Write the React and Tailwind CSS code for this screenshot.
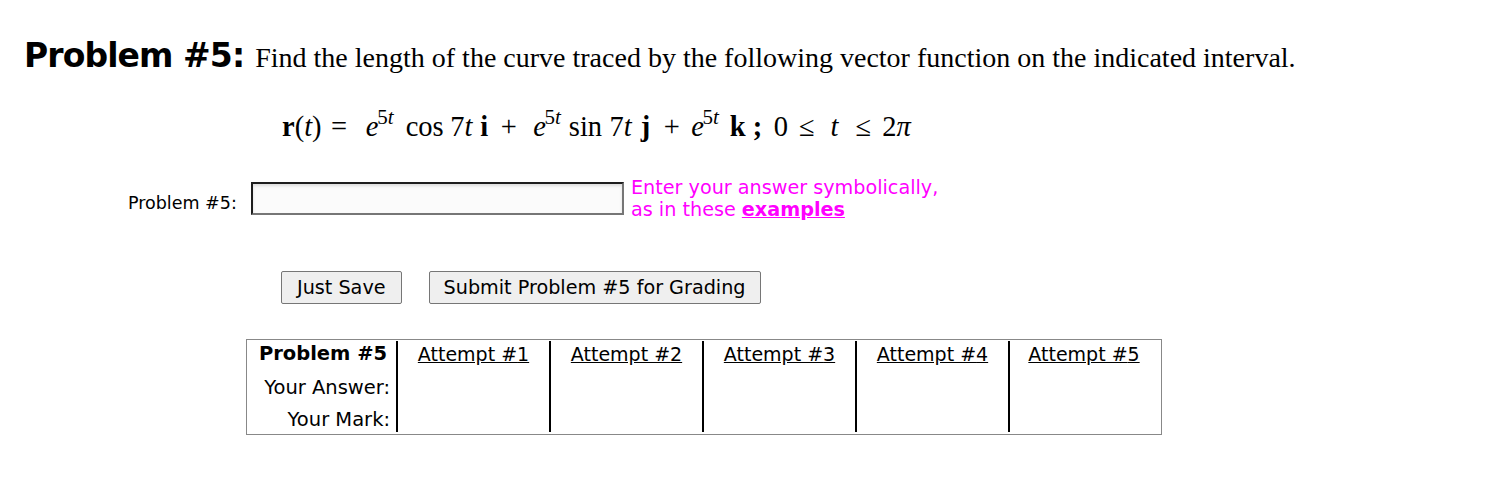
import React from "react";

const sans = "font-['DejaVu_Sans','Verdana',sans-serif]";
const serif = "font-['Liberation_Serif','Times_New_Roman',serif]";

function Sup({ className = "" }) {
  return (
    <span className={`text-[21px] relative -top-[12px] ${className}`}>
      5<i>t</i>
    </span>
  );
}

export default function App() {
  const attempts = [1, 2, 3, 4, 5];
  return (
    <div className={`${sans} text-black bg-white w-[1495px] h-[495px] pt-[36px] pl-[24px]`}>
      <div className="flex items-baseline">
        <span className="font-bold text-[33px] tracking-[-0.9px] leading-[40px]">Problem #5:</span>
        <span className={`${serif} text-[28px] ml-[11px]`}>
          Find the length of the curve traced by the following vector function on the indicated interval.
        </span>
      </div>

      <div className={`${serif} text-[28.5px] ml-[258px] mt-[28px] leading-[40px] whitespace-nowrap flex items-baseline`}>
        <span><b>r</b>(<i>t</i>)</span>
        <span className="ml-[9.5px]">=</span>
        <i className="ml-[18.5px]">e</i>
        <Sup className="-ml-[1px]" />
        <span className="ml-[12px]">cos</span>
        <span className="ml-[6.5px]">7<i>t</i></span>
        <b className="ml-[8px]">i</b>
        <span className="ml-[12.5px]">+</span>
        <i className="ml-[16.5px]">e</i>
        <Sup className="-ml-[1.5px]" />
        <span className="ml-[8px]">sin</span>
        <span className="ml-[7.5px]">7<i>t</i></span>
        <b className="ml-[9px]">j</b>
        <span className="ml-[13.5px]">+</span>
        <i className="ml-[11.5px]">e</i>
        <Sup className="-ml-[1.5px]" />
        <b className="ml-[11px]">k</b>
        <b className="ml-[7px]">;</b>
        <span className="ml-[11.5px]">0</span>
        <span className="ml-[11px]">≤</span>
        <i className="ml-[16px]">t</i>
        <span className="ml-[17px]">≤</span>
        <span className="ml-[11px]">2<i>π</i></span>
      </div>

      <div className="flex items-start mt-[33px] h-[33px]">
        <div className="w-[227px] pl-[104px] text-[17.5px] pt-[8px]">Problem #5:</div>
        <div className="w-[373px] h-[33px] border-2 border-t-[#1e1e1e] border-l-[#1e1e1e] border-b-[#767676] border-r-[#767676] bg-[#fbfbfb] shadow-[inset_0_2px_3px_rgba(0,0,0,0.12)]" />
        <div className="ml-[7px] text-[19.2px] leading-[22px] text-[#ff00ff] -mt-[5px]">
          <div>Enter your answer symbolically,</div>
          <div>
            as in these <span className="font-bold underline">examples</span>
          </div>
        </div>
      </div>

      <div className="flex gap-[27px] ml-[257px] mt-[56px]">
        <button className="h-[33px] px-[15px] pt-[2px] text-[19.2px] bg-[#efefef] border border-[#767676] rounded-[2px]">
          Just Save
        </button>
        <button className="h-[33px] px-[14px] pt-[2px] text-[19.2px] bg-[#efefef] border border-[#767676] rounded-[2px]">
          Submit Problem #5 for Grading
        </button>
      </div>

      <div className="ml-[222px] mt-[35px] w-[916px] h-[96px] border border-[#888888] p-[2px] pt-[1px] flex text-[19px] leading-[22px]">
        <div className="w-[147px] flex flex-col pt-[2px] text-[19.5px]">
          <div className="h-[34px] text-center font-bold pl-[1px]">Problem #5</div>
          <div className="h-[32px] text-right pr-[6px]">Your Answer:</div>
          <div className="text-right pr-[6px]">Your Mark:</div>
        </div>
        {attempts.map((n) => (
          <div
            key={n}
            className={`${n === 5 ? "w-[150px]" : "w-[153px]"} border-l-[2.5px] border-black text-center pt-[2px]`}
          >
            <span className="underline">Attempt #{n}</span>
          </div>
        ))}
      </div>
    </div>
  );
}
